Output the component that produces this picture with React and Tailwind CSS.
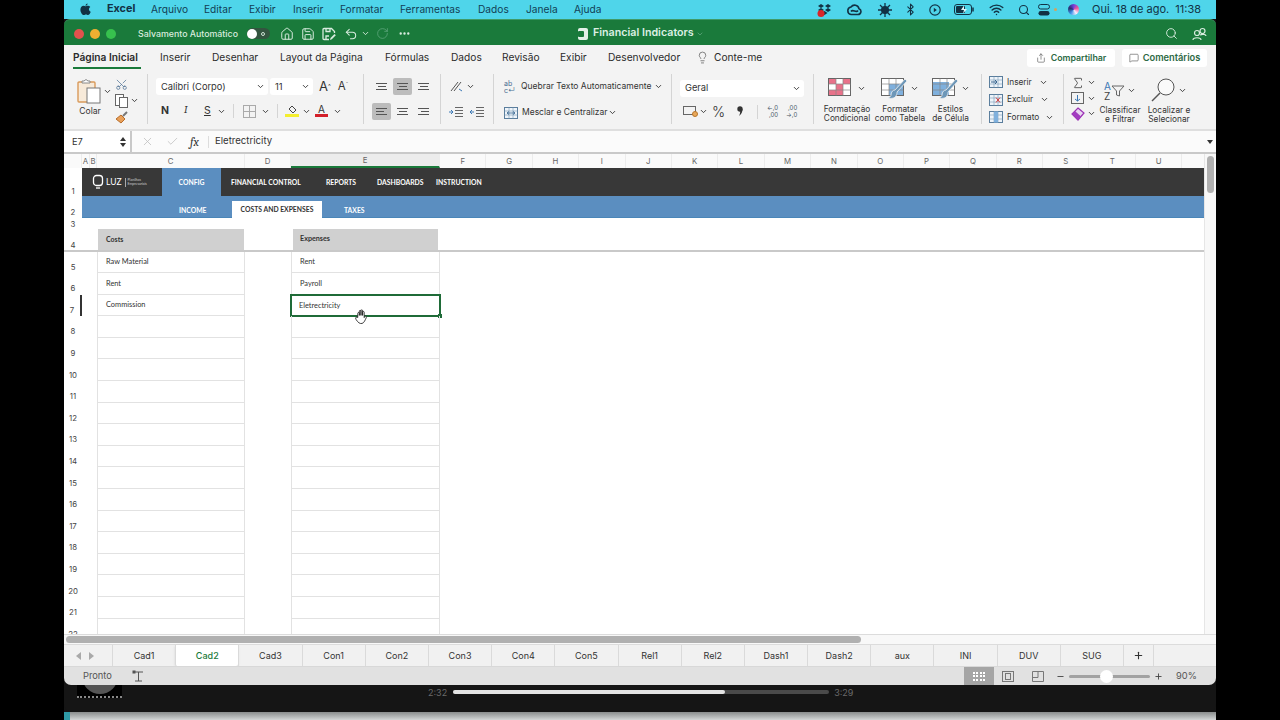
import React from 'react';
import { ChevronDown, Search, Wifi, Bluetooth, Lightbulb, Home, Save, Undo2, RotateCw, Ellipsis, X, Check, Plus, Minus, Scissors, Sigma, MessageSquare, Share } from 'lucide-react';

const menus = [
    ['Arquivo', 'w-[36px]'],
    ['Editar', 'w-[28px]'],
    ['Exibir', 'w-[27px]'],
    ['Inserir', 'w-[30px]'],
    ['Formatar', 'w-[43px]'],
    ['Ferramentas', 'w-[61px]'],
    ['Dados', 'w-[31px]'],
    ['Janela', 'w-[31px]'],
    ['Ajuda', 'w-[27px]'],
];

const ribbonTabs = [
    ['Inserir', 'w-[32px]'],
    ['Desenhar', 'w-[48px]'],
    ['Layout da Página', 'w-[85px]'],
    ['Fórmulas', 'w-[46px]'],
    ['Dados', 'w-[31px]'],
    ['Revisão', 'w-[38px]'],
    ['Exibir', 'w-[28px]'],
    ['Desenvolvedor', 'w-[74px]'],
];
const sheets = ['Cad1', 'Cad2', 'Cad3', 'Con1', 'Con2', 'Con3', 'Con4', 'Con5', 'Rel1', 'Rel2', 'Dash1', 'Dash2', 'aux', 'INI', 'DUV', 'SUG'];
const lateCols = ['F', 'G', 'H', 'I', 'J', 'K', 'L', 'M', 'N', 'O', 'P', 'Q', 'R', 'S', 'T', 'U'];
const tableRows = [8, 9, 10, 11, 12, 13, 14, 15, 16, 17, 18, 19, 20, 21];

function Caret({ className = '' }) {
    return <ChevronDown size={9} strokeWidth={2.4} className={`shrink-0 text-[#333] ${className}`} />;
}

function Sep({ h = 'h-[50px]' }) {
    return <div className={`w-px shrink-0 bg-[#d4d4d4] ${h}`} />;
}

function Brush() {
    return <path d="M24 1L14 12c-2 0-4 2-4 5 0 1-1 2-3 3 4 1 7 0 8-2 1-2 1-3 1-4L26 3z" fill="#6d97b8" stroke="#f3f3f3" strokeWidth="0.8" />;
}

function GridIcon({ fill, brush }) {
    return (
        <svg width="27" height="22" viewBox="0 0 27 22" className="shrink-0">
            <rect x="0.5" y="0.5" width="22" height="17" fill="#fff" stroke="#666" />
            {fill}
            <path d="M0.5 6h22M0.5 12h22M8 0.5v17M15 0.5v17" stroke="#888" strokeWidth="0.7" fill="none" />
            {brush && <Brush />}
        </svg>
    );
}

function LargeButton({ icon, top, bottom, width }) {
    return (
        <div className={`flex flex-col items-center ${width}`}>
            <div className="flex h-[26px] items-center gap-[2px]">
                {icon}
                <Caret />
            </div>
            <div className="mt-[3px] whitespace-nowrap text-center text-[8.3px] leading-[9.5px] text-[#333]">{top}<br />{bottom}</div>
        </div>
    );
}

function CellAction({ icon, label, w }) {
    return (
        <div className="flex h-[17.5px] items-center gap-[4px]">
            {icon}
            <span className={`whitespace-nowrap text-[8.3px] text-[#333] ${w}`}>{label}</span>
            <Caret />
        </div>
    );
}

function MiniTable({ children }) {
    return (
        <svg width="14" height="12" viewBox="0 0 14 12" className="shrink-0">
            <rect x="0.5" y="0.5" width="13" height="11" fill="#eef4fa" stroke="#5a7d9c" />
            <path d="M0.5 4h13M0.5 8h13M5 0.5v11M9 0.5v11" stroke="#7b9ab5" strokeWidth="0.6" />
            {children}
        </svg>
    );
}

function MenuBar() {
    return (
        <div className="flex h-[19px] shrink-0 items-center bg-[#4fd5ea] pl-[16px] pr-[15px] text-[10.2px] text-[#123f55]">
            <svg width="11" height="13" viewBox="0 0 11 13" className="shrink-0">
                <path d="M7.6 0.4c.1 1-.8 2.3-2.1 2.3C5.4 1.6 6.5.5 7.600.4zM5.500 3.300c.6 0 1.300-.6 2.500-.6.800 0 1.700.4 2.300 1.200-2 1.200-1.700 3.900.5 4.800-.5 1.400-1.600 3.400-2.800 3.400-.8 0-1.100-.5-2-.5s-1.300.5-2 .5C2.400 12.100.4 9.300.4 6.700c0-2.500 1.600-3.900 3.100-3.900.8 0 1.500.5 2 .5z" fill="#123245" />
            </svg>
            <span className="ml-[16px] w-[27px] text-[10.8px] font-bold text-[#123245]">Excel</span>
            <div className="ml-[17px] flex gap-[17px]">
                {menus.map(([label, width]) => (
                    <span key={label} className={`${width} whitespace-nowrap`}>{label}</span>
                ))}
            </div>
            <div className="ml-auto flex items-center text-[#123245]">
                <svg width="16" height="14" viewBox="0 0 16 14" className="mr-[13px]">
                    <path d="M4 1l3 2-3 2-3-2zM11 1l3 2-3 2-3-2zM4 5l3 2-3 2-3-2zM11 5l3 2-3 2-3-2zM7.500 8l3 2-3 2-3-2z" fill="#123245" />
                    <circle cx="4" cy="10.500" r="3.500" fill="#d9252a" />
                </svg>
                <svg width="17" height="12" viewBox="0 0 17 12" className="mr-[15px]" fill="none" stroke="#123245" strokeWidth="1.600">
                    <path d="M5 10.500h7a3 3 0 0 0 1-5.800A4.500 4.500 0 0 0 5 3 3.800 3.800 0 0 0 5 10.500zM5 7.500c2-3 5 2 7-1" />
                </svg>
                <svg width="14" height="14" viewBox="0 0 14 14" className="mr-[12px]" fill="#123245">
                    <circle cx="7" cy="7" r="4" />
                    <path d="M7 0v14M0 7h14M2 2l10 10M12 2L2 12" stroke="#123245" strokeWidth="1.300" />
                </svg>
                <Bluetooth size={13} strokeWidth={2} className="mr-[12px]" />
                <svg width="12" height="12" viewBox="0 0 12 12" className="mr-[13px]" fill="none" stroke="#123245" strokeWidth="1.200">
                    <circle cx="6" cy="6" r="5.200" />
                    <path d="M4.800 3.800l3 2.200-3 2.200z" fill="#123245" stroke="none" />
                </svg>
                <svg width="21" height="11" viewBox="0 0 21 11" className="mr-[14px]">
                    <rect x="0.500" y="0.500" width="17" height="10" rx="2.500" fill="none" stroke="#123245" />
                    <rect x="2" y="2" width="9" height="7" rx="1" fill="#123245" />
                    <path d="M19 3.500v4" stroke="#123245" strokeWidth="1.500" />
                    <path d="M10 1.500L7 6h3l-1 3.500L13 5h-3z" fill="#dff5f9" />
                </svg>
                <Wifi size={15} strokeWidth={2.300} className="mr-[14px]" />
                <Search size={12} strokeWidth={2.200} className="mr-[8px]" />
                <svg width="14" height="12" viewBox="0 0 14 12" className="mr-[2px]">
                    <rect x="0.500" y="0.500" width="11" height="4.500" rx="2.200" fill="none" stroke="#123245" />
                    <rect x="0.500" y="7" width="11" height="4.500" rx="2.200" fill="#123245" />
                </svg>
                <div className="mr-[11px] h-[3px] w-[3px] rounded-full bg-[#d6a35a]" />
                <div className="mr-[13px] h-[11px] w-[11px] rounded-full bg-[conic-gradient(#6f3fd8,#ee5a9c,#f5f0ff,#3f92e8,#27316e,#6f3fd8)]" />
                <span className="w-[109px] whitespace-nowrap text-right text-[11px]">Qui. 18 de ago.&nbsp; 11:38</span>
            </div>
        </div>
    );
}

function TitleBar() {
    return (
        <div className="flex h-[26px] shrink-0 items-center rounded-t-[6px] border-t border-[#3f9a67] bg-[#1a7a3b] pl-[10px] pr-[9px] pt-[2px] text-[#d9ecdf]">
            <div className="flex gap-[6px]">
                <div className="h-[10px] w-[10px] rounded-full bg-[#e2524d]" />
                <div className="h-[10px] w-[10px] rounded-full bg-[#efaf31]" />
                <div className="h-[10px] w-[10px] rounded-full bg-[#37c14e]" />
            </div>
            <span className="ml-[22px] w-[102px] whitespace-nowrap text-[8.800px] font-medium">Salvamento Automático</span>
            <div className="ml-[7px] flex h-[11px] w-[23px] items-center justify-between rounded-full bg-[#33543f] pr-[5px]">
                <div className="h-[10px] w-[10px] rounded-full bg-white" />
                <div className="h-[4px] w-[4px] rounded-full border border-[#cfe3d5]" />
            </div>
            <Home size={14} strokeWidth={1.700} className="ml-[10px]" />
            <Save size={14} strokeWidth={1.700} className="ml-[7px]" />
            <svg width="14" height="14" viewBox="0 0 14 14" className="ml-[7px]" fill="none" stroke="#d9ecdf" strokeWidth="1.300">
                <path d="M7 12.500H2a1 1 0 0 1-1-1v-9a1 1 0 0 1 1-1h7.500l3 3V6M4 1.500v3h4v-3M4 12v-3h3" />
                <path d="M8 13l.5-2 4-4 1.300 1.300-4 4z" fill="#d9ecdf" stroke="none" />
            </svg>
            <Undo2 size={14} strokeWidth={1.800} className="ml-[8px]" />
            <ChevronDown size={9} strokeWidth={2.400} className="ml-[3px]" />
            <RotateCw size={13} strokeWidth={1.400} className="ml-[6px] text-[#5fa67d]" />
            <Ellipsis size={13} strokeWidth={2.400} className="ml-[9px]" />
            <div className="ml-[167px] flex h-[12px] w-[10px] items-center justify-start rounded-[2px] bg-[#e4f0e8]">
                <div className="h-[6px] w-[6px] rounded-[1px] bg-[#1a7a3b]" />
            </div>
            <span className="ml-[5px] w-[101px] whitespace-nowrap text-[10.700px] font-semibold text-[#dcefe3]">Financial Indicators</span>
            <ChevronDown size={8} strokeWidth={2} className="ml-[2px] text-[#6dae88]" />
            <Search size={13} strokeWidth={1.700} className="ml-auto" />
            <svg width="15" height="14" viewBox="0 0 15 14" className="ml-[14px]" fill="none" stroke="#d9ecdf" strokeWidth="1.200">
                <circle cx="5" cy="6" r="2.500" />
                <circle cx="10.500" cy="4" r="2.500" />
                <path d="M1 13c0-3 8-3 8 0M8 8c2-1 6-1 6 1" />
            </svg>
        </div>
    );
}

function RibbonTabs() {
    return (
        <div className="flex h-[23px] shrink-0 items-center bg-[#f3f3f3] pl-[9px] pr-[9px] text-[10.200px] text-[#2b2b2b]">
            <div className="relative flex h-full w-[68px] items-center whitespace-nowrap font-semibold">
                Página Inicial
                <div className="absolute bottom-0 left-0 right-0 h-[2px] bg-[#1a7a3b]" />
            </div>
            <div className="ml-[19px] flex gap-[20px] whitespace-nowrap">
                {ribbonTabs.map(([tab, width]) => <span key={tab} className={width}>{tab}</span>)}
            </div>
            <Lightbulb size={13} strokeWidth={1.300} className="ml-[14px] text-[#555]" />
            <span className="ml-[5px] whitespace-nowrap">Conte-me</span>
            <div className="ml-auto flex h-[18px] w-[88px] items-center justify-center gap-[5px] rounded-[3px] bg-white text-[8.800px] font-semibold text-[#2d6a45]">
                <Share size={10} strokeWidth={1.500} className="text-[#555]" /> Compartilhar
            </div>
            <div className="ml-[7px] flex h-[18px] w-[85px] items-center justify-center gap-[4px] rounded-[3px] bg-white text-[9.300px] font-semibold text-[#2d6a45]">
                <MessageSquare size={10} strokeWidth={1.500} className="text-[#555]" /> Comentários
            </div>
        </div>
    );
}

function Ribbon() {
    return (
        <div className="flex h-[60px] shrink-0 items-center bg-[#f3f3f3] text-[#333]">
            <div className="flex w-[83px] shrink-0 pl-[13px]">
                <div className="flex w-[38px] flex-col pt-[4px]">
                    <div className="flex items-center">
                        <svg width="26" height="26" viewBox="0 0 26 26" fill="none" className="shrink-0">
                            <rect x="1" y="3" width="17" height="20" rx="1" fill="#f7ead9" stroke="#d99a5b" strokeWidth="1.400" />
                            <path d="M5 4V2h2l2-1.500L11 2h2v2z" fill="#fff" stroke="#888" />
                            <rect x="10" y="9" width="13" height="15" fill="#fff" stroke="#777" />
                        </svg>
                        <Caret />
                    </div>
                    <span className="w-[26px] text-center text-[8.600px]">Colar</span>
                </div>
                <div className="flex flex-col gap-[3px] pt-[3px]">
                    <Scissors size={13} strokeWidth={1.300} className="rotate-[-90deg] text-[#4a6e92]" />
                    <div className="flex items-center gap-[2px]">
                        <svg width="13" height="14" viewBox="0 0 13 14" fill="#fff" stroke="#666" className="shrink-0"><rect x="0.500" y="0.500" width="8" height="11" /><rect x="4.500" y="3.500" width="8" height="10" /></svg>
                        <Caret />
                    </div>
                    <svg width="14" height="13" viewBox="0 0 14 13"><path d="M1 8l5-4 4 4-4 4z" fill="#e8a05a" stroke="#b86d2a" /><path d="M8 5l4-4" stroke="#777" strokeWidth="2" /></svg>
                </div>
            </div>
            <Sep />
            <div className="ml-[8px] flex w-[207px] shrink-0 flex-col gap-[8px] pb-[1px]">
                <div className="flex items-center">
                    <div className="flex h-[17px] w-[112px] items-center justify-between rounded-[3px] bg-white pl-[5px] pr-[3px] text-[9.300px]">Calibri (Corpo)<Caret /></div>
                    <div className="ml-[2px] flex h-[17px] w-[43px] items-center justify-between rounded-[3px] bg-white pl-[5px] pr-[3px] text-[9.300px]">11<Caret /></div>
                    <span className="ml-[6px] text-[13px] leading-none">A<sup className="text-[6px]">^</sup></span>
                    <span className="ml-[7px] text-[11.500px] leading-none">A<sup className="text-[6px]">ˇ</sup></span>
                </div>
                <div className="flex items-center text-[10.500px]">
                    <span className="w-[18px] pl-[5px] font-bold">N</span>
                    <span className="ml-[10px] w-[12px] font-serif italic">I</span>
                    <span className="ml-[8px] w-[8px] underline">S</span>
                    <Caret className="ml-[5px]" />
                    <div className="ml-[7px] h-[14px] w-px bg-[#d4d4d4]" />
                    <svg width="13" height="13" viewBox="0 0 13 13" className="ml-[9px]" fill="none" stroke="#aaa"><rect x="0.500" y="0.500" width="12" height="12" /><path d="M6.500 0v13M0 6.500h13" /></svg>
                    <Caret className="ml-[5px]" />
                    <div className="ml-[7px] h-[14px] w-px bg-[#d4d4d4]" />
                    <div className="ml-[7px] flex w-[14px] flex-col items-center">
                        <svg width="11" height="9" viewBox="0 0 11 9" fill="none" stroke="#444"><path d="M5 1l4 4-3 3-4-4z" /></svg>
                        <div className="h-[3px] w-[14px] bg-[#f4ee2e]" />
                    </div>
                    <Caret className="ml-[3px]" />
                    <div className="ml-[4px] flex w-[13px] flex-col items-center leading-[9px]">
                        <span className="text-[10px]">A</span>
                        <div className="h-[3px] w-[13px] bg-[#d3202a]" />
                    </div>
                    <Caret className="ml-[5px]" />
                </div>
            </div>
            <Sep />
            <AlignGroup />
            <Sep />
            <div className="ml-[10px] flex w-[167px] shrink-0 flex-col gap-[9px] text-[8.500px]">
                <div className="flex h-[17px] items-center gap-[4px] whitespace-nowrap pt-[1px]">
                    <span className="w-[13px] text-[7px] leading-[7px] text-[#4a6e92]">ab<br />c↵</span>
                    <span className="w-[129px]">Quebrar Texto Automaticamente</span> <Caret />
                </div>
                <div className="flex h-[17px] items-center gap-[4px] whitespace-nowrap pt-[1px]">
                    <MiniTable><path d="M3 6h8M9 4.500l2 1.500-2 1.500M5 4.500L3 6l2 1.500" stroke="#36648f" strokeWidth="0.800" fill="none" /></MiniTable>
                    <span className="w-[82px]">Mesclar e Centralizar</span> <Caret />
                </div>
            </div>
            <Sep />
            <div className="ml-[8px] flex w-[133px] shrink-0 flex-col gap-[8px]">
                <div className="flex h-[17px] w-[124px] items-center justify-between rounded-[3px] bg-white pl-[5px] pr-[3px] text-[9.300px]">Geral<Caret /></div>
                <div className="flex items-center pl-[3px]">
                    <svg width="15" height="11" viewBox="0 0 15 11" fill="none" stroke="#666" className="shrink-0"><rect x="0.500" y="0.500" width="12" height="8" /><circle cx="12" cy="8" r="2.500" fill="#e8a95c" stroke="#b9762c" /></svg>
                    <Caret className="ml-[1px]" />
                    <span className="ml-[4px] w-[14px] text-[14px] font-light leading-[14px]">%</span>
                    <svg width="6" height="11" viewBox="0 0 6 11" className="ml-[11px]"><circle cx="3" cy="3" r="2.700" fill="#333" /><path d="M5.500 3c0 3-1 5-3.500 7 1-2 1.500-4 1-6z" fill="#333" /></svg>
                    <div className="ml-[14px] h-[14px] w-px bg-[#d4d4d4]" />
                    <span className="ml-[9px] whitespace-nowrap text-right text-[6px] leading-[6.500px] text-[#456]">←,0<br />,00</span>
                    <span className="ml-[8px] whitespace-nowrap text-right text-[6px] leading-[6.500px] text-[#456]">,00<br />→,0</span>
                </div>
            </div>
            <Sep />
            <div className="ml-[8px] flex w-[159px] shrink-0 gap-[2px] pt-[1px]">
                <LargeButton width="w-[50px]" top="Formatação" bottom="Condicional" icon={<GridIcon fill={<path d="M1 1h7v5H1zM15 1h7v5h-7zM1 12h14v5H1zM8 6h7v6H8z" fill="#e8728a" />} />} />
                <LargeButton width="w-[52px]" top="Formatar" bottom="como Tabela" icon={<GridIcon brush fill={<path d="M8 6h14v11H8z" fill="#7fb0dd" />} />} />
                <LargeButton width="w-[45px]" top="Estilos" bottom="de Célula" icon={<GridIcon brush fill={<path d="M1 4h16v13H1z" fill="#7fb0dd" />} />} />
            </div>
            <Sep />
            <div className="ml-[7px] flex w-[74px] shrink-0 flex-col pt-[1px]">
                <CellAction w="w-[28px]" label="Inserir" icon={<MiniTable><path d="M2 6h6M6 4l2 2-2 2" stroke="#36648f" fill="none" /></MiniTable>} />
                <CellAction w="w-[29px]" label="Excluir" icon={<MiniTable><path d="M7 3.500l4 5M11 3.500l-4 5" stroke="#d43b3b" /></MiniTable>} />
                <CellAction w="w-[34px]" label="Formato" icon={<MiniTable><path d="M5 0.500h4v11H5z" fill="#7fb0dd" /></MiniTable>} />
            </div>
            <Sep />
            <div className="ml-[7px] flex shrink-0 items-start pt-[2px]">
                <div className="flex w-[25px] flex-col gap-[2px]">
                    <div className="flex items-center gap-[2px]"><Sigma size={14} strokeWidth={1.300} /><Caret /></div>
                    <div className="flex items-center gap-[2px]">
                        <svg width="14" height="13" viewBox="0 0 14 13" fill="none" stroke="#666" className="shrink-0"><rect x="0.500" y="0.500" width="12" height="11" /><path d="M6.500 3v6M4 7l2.500 2L9 7" stroke="#3b78b5" /></svg>
                        <Caret />
                    </div>
                    <div className="flex items-center gap-[2px]">
                        <svg width="14" height="14" viewBox="0 0 14 14" className="shrink-0"><path d="M7 1l6 5-6 7-6-6z" fill="#e8d6f0" stroke="#9b2fb5" strokeWidth="1.200" /><path d="M1 7l6 6 3-3.500-6-5.500z" fill="#a23cc0" /></svg>
                        <Caret />
                    </div>
                </div>
                <div className="ml-[1px] flex w-[46px] flex-col items-center">
                    <div className="flex h-[30px] items-center">
                        <span className="text-[10px] leading-[10px] text-[#3b78b5]">A<br /><span className="text-[#444]">Z</span></span>
                        <svg width="14" height="12" viewBox="0 0 14 12" fill="none" stroke="#666" className="shrink-0"><path d="M1 1h12L8.500 6v5L5.500 10V6z" /></svg>
                        <Caret className="ml-[2px]" />
                    </div>
                    <div className="whitespace-nowrap text-center text-[8.300px] leading-[9.500px]">Classificar<br />e Filtrar</div>
                </div>
                <div className="ml-[2px] flex w-[48px] flex-col items-center">
                    <div className="flex h-[30px] items-center">
                        <svg width="25" height="25" viewBox="0 0 25 25" fill="none" stroke="#555" className="shrink-0"><circle cx="15" cy="9" r="8" fill="#fafafa" /><path d="M9 15L1 23" strokeWidth="1.400" /></svg>
                        <Caret className="ml-[2px]" />
                    </div>
                    <div className="whitespace-nowrap text-center text-[8.300px] leading-[9.500px]">Localizar e<br />Selecionar</div>
                </div>
            </div>
        </div>
    );
}

function AlignGroup() {
    const line = (w) => <div className={`h-px bg-[#555] ${w}`} />;
    const lines = (cls, box = '') => (
        <div className={`flex h-[17px] w-[19px] flex-col justify-center gap-[2px] rounded-[2px] ${cls} ${box}`}>
            {line('w-[11px]')}{line('w-[8px]')}{line('w-[11px]')}
        </div>
    );
    return (
        <>
            <div className="ml-[8px] flex w-[68px] shrink-0 flex-col gap-[8px]">
                <div className="flex gap-[2px]">
                    {lines('items-center')}
                    {lines('items-center', 'bg-[#bcbcbc]')}
                    {lines('items-center')}
                </div>
                <div className="flex gap-[2px]">
                    {lines('items-start pl-[4px]', 'bg-[#bcbcbc]')}
                    {lines('items-center')}
                    {lines('items-end pr-[4px]')}
                </div>
            </div>
            <Sep />
            <div className="ml-[8px] flex w-[44px] shrink-0 flex-col gap-[8px]">
                <div className="flex h-[17px] items-center gap-[3px]">
                    <svg width="14" height="13" viewBox="0 0 14 13" fill="none" stroke="#555"><path d="M2 11L9 2M5 11l7-9" /><path d="M10 9l3 2" stroke="#3b78b5" /></svg>
                    <Caret />
                </div>
                <div className="flex h-[17px] items-center gap-[7px]">
                    <svg width="14" height="12" viewBox="0 0 14 12" fill="none" stroke="#666"><path d="M6 1.500h8M6 4.500h8M6 7.500h8M6 10.500h8" /><path d="M0 6h4M2 4l2 2-2 2" stroke="#3b78b5" /></svg>
                    <svg width="14" height="12" viewBox="0 0 14 12" fill="none" stroke="#666"><path d="M6 1.500h8M6 4.500h8M6 7.500h8M6 10.500h8" /><path d="M4 6H0M2 4L0 6l2 2" stroke="#3b78b5" /></svg>
                </div>
            </div>
        </>
    );
}

function FormulaBar() {
    return (
        <div className="flex h-[23px] shrink-0 items-center border-t-2 border-[#dfdfdf] bg-[#fbfbfb] text-[#333]">
            <div className="flex h-full w-[68px] items-center justify-between border-r-2 border-[#c9c9c9] bg-white pl-[8px] pr-[4px] text-[9.300px]">
                E7
                <div className="flex flex-col gap-[2px]">
                    <div className="h-0 w-0 border-x-[3px] border-b-[4px] border-x-transparent border-b-[#333]" />
                    <div className="h-0 w-0 border-x-[3px] border-t-[4px] border-x-transparent border-t-[#333]" />
                </div>
            </div>
            <X size={13} strokeWidth={1.400} className="ml-[9px] text-[#bdbdbd]" />
            <Check size={13} strokeWidth={1.400} className="ml-[12px] text-[#bdbdbd]" />
            <span className="ml-[11px] w-[16px] font-serif text-[12px] italic">fx</span>
            <div className="ml-[2px] h-[12px] w-px bg-[#ddd]" />
            <span className="ml-[6px] text-[9.600px]">Eletrectricity</span>
            <div className="ml-auto mr-[3px] h-0 w-0 border-x-[3px] border-t-[4px] border-x-transparent border-t-[#333]" />
        </div>
    );
}

function ColHead({ w, label, active }) {
    return (
        <div className={`flex h-full shrink-0 items-center justify-center border-r border-[#ececec] pt-[1px] ${w} ${active ? 'border-b-2 border-b-[#1a7a3b] bg-[#ececec]' : ''}`}>
            {label}
        </div>
    );
}

function ColumnHeaders() {
    return (
        <div className="flex h-[14px] shrink-0 items-center overflow-hidden bg-[#fafafa] text-[7.800px] text-[#666]">
            <div className="h-full w-[18px] shrink-0 border-r border-[#ececec]" />
            <ColHead w="w-[8px]" label="A" />
            <ColHead w="w-[7px]" label="B" />
            <ColHead w="w-[148px]" label="C" />
            <ColHead w="w-[46px]" label="D" />
            <ColHead w="w-[149px]" label="E" active />
            {lateCols.map((col) => <ColHead key={col} w="w-[46.4px]" label={col} />)}
            <ColHead w="w-[24px]" label="" />
        </div>
    );
}

function RowHead({ n, active, shift = 'pb-0' }) {
    return (
        <div className={`flex h-full w-[18px] shrink-0 items-end justify-center bg-white text-[7.800px] leading-[10px] text-[#444] ${shift} ${active ? 'border-r-2 border-r-[#333]' : ''}`}>{n}</div>
    );
}

function TableRow({ n, c, e, active, selected }) {
    return (
        <div className="flex h-[21.6px] shrink-0">
            <RowHead n={n} active={active} shift="pb-[1.5px]" />
            <div className="w-[15px] shrink-0" />
            <div className="flex w-[148px] shrink-0 items-center border-x border-b border-[#e2e2e2] pl-[8px] font-['Lato',sans-serif] text-[7.4px] text-[#333]">{c}</div>
            <div className="w-[46px] shrink-0" />
            <div className={`relative flex shrink-0 items-center font-['Lato',sans-serif] text-[7.4px] text-[#333] ${selected ? '-mx-px -my-px w-[151px] border-2 border-[#1f6b38] pl-[7px]' : 'w-[149px] border-x border-b border-[#e2e2e2] pl-[8px]'}`}>
                {e}
                {selected && <div className="absolute -bottom-[3px] -right-[3px] h-[4px] w-[4px] bg-[#1f6b38]" />}
                {selected && (
                    <svg width="15" height="15" viewBox="0 0 13 14" className="absolute left-[62px] top-[13px] z-10">
                        <path d="M3 8V4c0-1 1.500-1 1.500 0v2-4c0-1 1.500-1 1.500 0v4-4.500c0-1 1.500-1 1.500 0V6V3c0-1 1.500-1 1.500 0v5c1-2 2.500-1.500 2 0-1 2-2 5-4 5.500H5.500C4 13.500 1 10 1 8.500c0-1 1.200-1 2-.5z" fill="#fff" stroke="#222" strokeWidth="0.800" />
                    </svg>
                )}
            </div>
        </div>
    );
}

function Sheet() {
    return (
        <div className="flex h-[466px] min-w-0 shrink-0 flex-col overflow-hidden bg-white">
            <div className="flex h-[28px] shrink-0">
                <RowHead n="1" />
                <div className="flex flex-1 items-stretch bg-[#383838] font-['Lato',sans-serif] text-[6.800px] font-bold text-white">
                    <div className="flex w-[80px] shrink-0 items-center pl-[10px]">
                        <svg width="12" height="16" viewBox="0 0 12 16" fill="none" stroke="#fff" strokeWidth="1.300"><rect x="1.500" y="1.500" width="9" height="10" rx="3" /><path d="M4 14h4" /></svg>
                        <span className="ml-[2px] text-[8.500px] font-normal">LUZ</span>
                        <div className="ml-[3px] h-[9px] w-px bg-[#aaa]" />
                        <span className="ml-[2px] text-[3.500px] font-normal leading-[4px] text-[#ccc]">Planilhas<br />Empresariais</span>
                    </div>
                    <div className="flex w-[59px] shrink-0 items-center justify-center bg-[#5b8ec0]">CONFIG</div>
                    <span className="ml-[10px] mt-[9px] w-[69px] whitespace-nowrap">FINANCIAL CONTROL</span>
                    <span className="ml-[26px] mt-[9px] w-[31px]">REPORTS</span>
                    <span className="ml-[20px] mt-[9px] w-[47px]">DASHBOARDS</span>
                    <span className="ml-[12px] mt-[9px]">INSTRUCTION</span>
                </div>
            </div>
            <div className="flex h-[22px] shrink-0">
                <RowHead n="2" shift="pb-[1px]" />
                <div className="flex flex-1 border-b border-[#4a86b8] bg-[#5b8ec0] font-['Lato',sans-serif] text-[6.800px] font-bold text-white">
                    <span className="ml-[97px] mt-[9px] w-[28px]">INCOME</span>
                    <div className="ml-[25px] mt-[5px] flex h-[17px] w-[90px] items-center justify-center bg-white text-[#333]">COSTS AND EXPENSES</div>
                    <span className="ml-[22px] mt-[9px]">TAXES</span>
                </div>
            </div>
            <div className="flex h-[11px] shrink-0"><RowHead n="3" /></div>
            <div className="flex h-[20.5px] shrink-0">
                <RowHead n="4" />
                <div className="ml-[16px] flex w-[146px] shrink-0 items-center bg-[#d0d0d0] pl-[8px] font-['Lato',sans-serif] text-[7px] font-bold text-[#333]">Costs</div>
                <div className="ml-[49px] flex w-[145px] shrink-0 items-center bg-[#d0d0d0] pl-[7px] font-['Lato',sans-serif] text-[7.200px] font-bold text-[#333]">Expenses</div>
            </div>
            <div className="h-[2px] shrink-0 bg-[#c9c9c9]" />
            <TableRow n="5" c="Raw Material" e="Rent" />
            <TableRow n="6" c="Rent" e="Payroll" />
            <TableRow n="7" c="Commission" e="Eletrectricity" active selected />
            {tableRows.map((n) => <TableRow key={n} n={n} />)}
            <TableRow n="22" />
        </div>
    );
}

function SheetTabs() {
    return (
        <div className="flex h-[21px] shrink-0 items-center bg-[#f1f1f1] text-[9px] text-[#333]">
            <div className="flex w-[48px] shrink-0 items-center gap-[8px] pl-[12px]">
                <div className="h-0 w-0 border-y-[4px] border-r-[5px] border-y-transparent border-r-[#a9a9a9]" />
                <div className="h-0 w-0 border-y-[4px] border-l-[5px] border-y-transparent border-l-[#a9a9a9]" />
            </div>
            {sheets.map((name) => (
                <div
                    key={name}
                    className={`flex h-full w-[63.2px] shrink-0 items-center justify-center border-l border-[#dadada] ${name === 'Cad2' ? 'rounded-b-[2px] bg-white font-medium text-[#1a7a3b] shadow-sm' : ''}`}
                >
                    {name}
                </div>
            ))}
            <div className="flex h-full w-[31px] shrink-0 items-center justify-center border-x border-[#dadada]">
                <Plus size={11} strokeWidth={2.400} />
            </div>
        </div>
    );
}

function StatusBar() {
    return (
        <div className="flex h-[19px] shrink-0 items-center rounded-b-[7px] border-t border-[#d8d8d8] bg-[#e1e1e1] pl-[19px] text-[9.300px] text-[#555]">
            <span className="w-[32px]">Pronto</span>
            <svg width="13" height="13" viewBox="0 0 13 13" className="ml-[17px]" fill="none" stroke="#555"><path d="M2 2h9M6.500 2v9M3 11h7" /><rect x="1" y="1" width="2" height="2" fill="#555" /></svg>
            <div className="ml-auto flex h-full w-[30px] items-center justify-center bg-[#a5a5a5]">
                <div className="grid grid-cols-4 gap-[1.5px]">
                    {Array.from({ length: 12 }, (_, i) => <div key={i} className="h-[2px] w-[2px] bg-white" />)}
                </div>
            </div>
            <svg width="12" height="11" viewBox="0 0 12 11" className="ml-[8px]" fill="none" stroke="#777"><rect x="0.500" y="0.500" width="11" height="10" /><rect x="3.500" y="2.500" width="5" height="6" /></svg>
            <svg width="12" height="11" viewBox="0 0 12 11" className="ml-[18px]" fill="none" stroke="#777"><path d="M0.500 0.500h11v10h-11zM6 0.500v6H0.500" /></svg>
            <Minus size={9} strokeWidth={2.400} className="ml-[12px] text-[#444]" />
            <div className="relative ml-[4px] h-[3px] w-[81px] rounded-full bg-[#a2a2a2]">
                <div className="absolute left-[31px] top-[-5px] h-[13px] w-[13px] rounded-full bg-white" />
            </div>
            <Plus size={9} strokeWidth={2.400} className="ml-[4px] text-[#444]" />
            <span className="ml-[13px] mr-[19px] w-[21px]">90%</span>
        </div>
    );
}

function VideoStrip() {
    return (
        <div className="flex h-[27px] shrink-0 items-start rounded-b-[8px] bg-[#151515] text-[9px] text-[#6a6a6a]">
            <div className="ml-[13px] h-[13px] w-[45px] overflow-hidden border-b-2 border-dotted border-b-[#888] bg-black">
                <div className="mx-auto h-[36px] w-[36px] -translate-y-[27px] rounded-full bg-[#555]" />
            </div>
            <span className="ml-[306px] mt-[1px]">2:32</span>
            <div className="ml-[6px] mt-[5px] h-[4px] w-[376px] rounded-full bg-[#4a4a4a]">
                <div className="h-full w-[272px] rounded-full bg-[#e4e4e4]" />
            </div>
            <span className="ml-[5px] mt-[1px]">3:29</span>
        </div>
    );
}

export default function App() {
    return (
        <div className="flex h-[720px] w-[1280px] justify-center overflow-hidden bg-black font-['Inter',sans-serif]">
            <div className="flex w-[1152px] flex-col bg-[#4fd5ea]">
                <MenuBar />
                <div className="flex flex-col bg-[#151515]">
                    <TitleBar />
                    <div className="h-px bg-[#f3f3f3]" />
                    <RibbonTabs />
                    <Ribbon />
                    <FormulaBar />
                    <div className="flex shrink-0 border-t-2 border-[#c9c9c9] bg-white">
                        <div className="flex w-[1140px] shrink-0 flex-col">
                            <ColumnHeaders />
                            <Sheet />
                        </div>
                        <div className="w-[12px] shrink-0 border-l border-[#e6e6e6] bg-[#f8f8f8] pl-[2px] pt-[2px]">
                            <div className="h-[37px] w-[7px] rounded-full bg-[#b0b0b0]" />
                        </div>
                    </div>
                    <div className="h-[11px] shrink-0 border-y border-[#dcdcdc] bg-[#f8f8f8] pl-[2px] pt-[1px]">
                        <div className="h-[7px] w-[795px] rounded-full bg-[#b0b0b0]" />
                    </div>
                    <SheetTabs />
                    <StatusBar />
                    <VideoStrip />
                </div>
                <div className="flex flex-1 bg-linear-to-b from-[#8a8d8d] to-[#d4d7d7]">
                    <div className="w-[6px] bg-[#2f9aa6]" />
                </div>
            </div>
        </div>
    );
}
